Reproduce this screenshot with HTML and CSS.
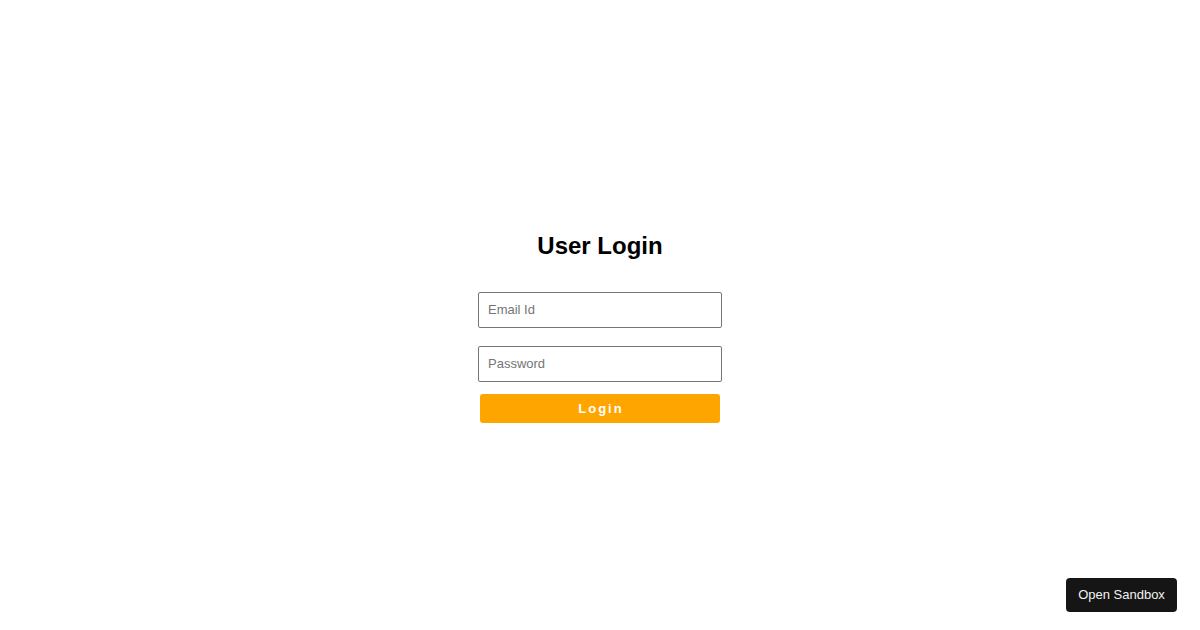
FILE: index.html
```html
<!DOCTYPE html>
<html lang="en">
<head>
<meta charset="utf-8">
<title>User Login</title>
<link rel="stylesheet" href="styles.css">
</head>
<body>
<main class="page">
  <form class="login">
    <h1 class="title">User Login</h1>
    <input class="field" type="email" placeholder="Email Id">
    <input class="field" type="password" placeholder="Password">
    <button class="submit" type="button">Login</button>
  </form>
</main>
<a class="sandbox" href="#">Open Sandbox</a>
</body>
</html>
```
FILE: styles.css
```css
html, body {
  margin: 0;
  padding: 0;
  background: #ffffff;
  font-family: "Liberation Sans", Arial, sans-serif;
}
.page {
  display: flex;
  justify-content: center;
  padding-top: 232px;
}
.login {
  width: 244px;
  display: flex;
  flex-direction: column;
  align-items: center;
}
.title {
  margin: 0 0 32px;
  font-size: 24px;
  line-height: 28px;
  font-weight: bold;
  color: #000;
  text-align: center;
}
.field {
  box-sizing: border-box;
  width: 244px;
  height: 36px;
  margin: 0 0 18px;
  padding: 0 9px 2px;
  border: 1px solid #767676;
  border-radius: 2px;
  font-family: "Liberation Sans", Arial, sans-serif;
  font-size: 13px;
  color: #333;
  background: #fff;
  outline: none;
}
.field:last-of-type {
  margin-bottom: 12px;
}
.field::placeholder {
  color: #757575;
}
.submit {
  box-sizing: border-box;
  width: 240px;
  height: 29px;
  border: none;
  border-radius: 3px;
  background: #ffa500;
  color: #fff;
  font-family: "Liberation Sans", Arial, sans-serif;
  font-size: 13px;
  font-weight: bold;
  letter-spacing: 2px;
  padding: 0 0 1px 2px;
  cursor: pointer;
}
.sandbox {
  position: fixed;
  right: 23px;
  bottom: 18px;
  box-sizing: border-box;
  width: 111px;
  height: 34px;
  padding-bottom: 2px;
  display: flex;
  align-items: center;
  justify-content: center;
  background: #151515;
  color: #f2f2f2;
  border-radius: 4px;
  font-size: 13px;
  text-decoration: none;
}
```
